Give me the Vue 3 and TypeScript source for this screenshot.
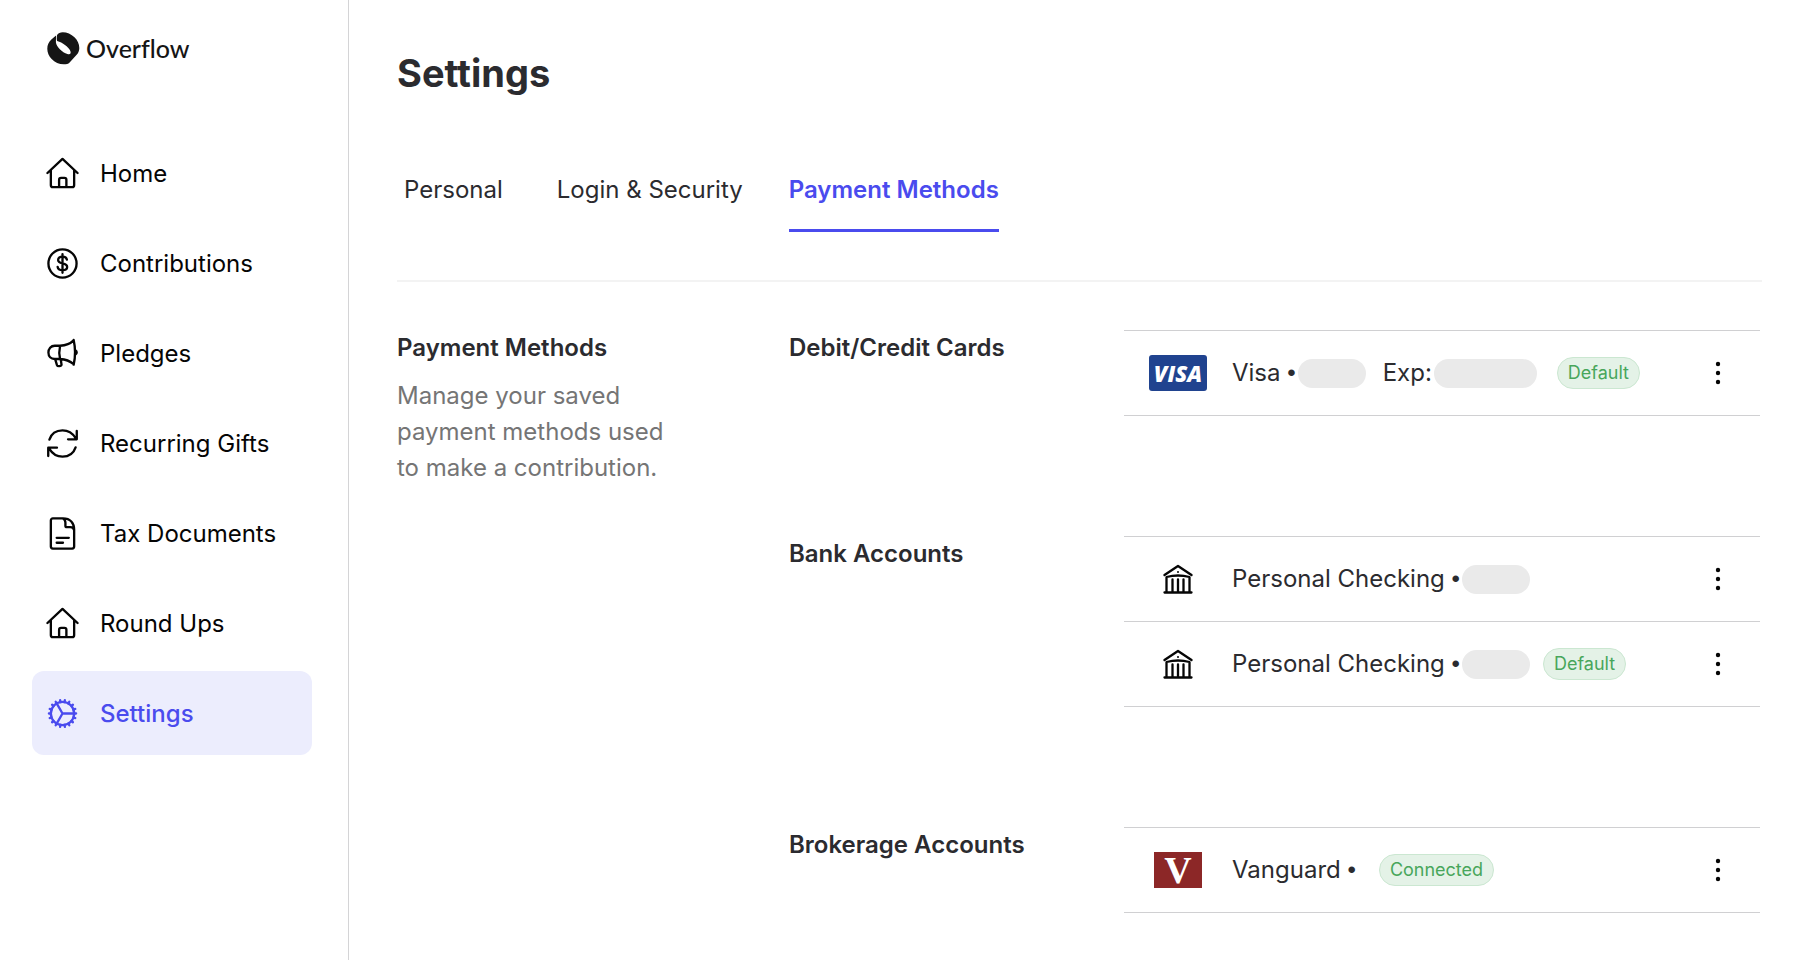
<script setup lang="ts">
import { ref } from 'vue'

type IconName = 'home' | 'coin' | 'megaphone' | 'cycle' | 'document' | 'gear'

interface NavItem {
  label: string
  icon: IconName
}

interface Method {
  name: string
  logo: 'visa' | 'bank' | 'vanguard'
  masked: boolean
  expiry?: boolean
  badge?: string
}

interface Group {
  title: string
  methods: Method[]
}

const navItems: NavItem[] = [
  { label: 'Home', icon: 'home' },
  { label: 'Contributions', icon: 'coin' },
  { label: 'Pledges', icon: 'megaphone' },
  { label: 'Recurring Gifts', icon: 'cycle' },
  { label: 'Tax Documents', icon: 'document' },
  { label: 'Round Ups', icon: 'home' },
  { label: 'Settings', icon: 'gear' },
]
const activeNav = ref('Settings')

const tabs = ['Personal', 'Login & Security', 'Payment Methods']
const activeTab = ref('Payment Methods')

const groups: Group[] = [
  {
    title: 'Debit/Credit Cards',
    methods: [{ name: 'Visa', logo: 'visa', masked: true, expiry: true, badge: 'Default' }],
  },
  {
    title: 'Bank Accounts',
    methods: [
      { name: 'Personal Checking', logo: 'bank', masked: true },
      { name: 'Personal Checking', logo: 'bank', masked: true, badge: 'Default' },
    ],
  },
  {
    title: 'Brokerage Accounts',
    methods: [{ name: 'Vanguard', logo: 'vanguard', masked: false, badge: 'Connected' }],
  },
]

const teeth = Array.from({ length: 18 }, (_, i) => i * 20 + 10)
</script>

<template>
  <div class="app">
    <aside class="sidebar">
      <a class="brand" href="#">
        <svg class="brand-mark" viewBox="0 0 34 34" aria-hidden="true">
          <path
            fill="#151515"
            d="M9.300 3.500 4.500 7.600C1.700 10.200.3 13.200.3 17.200c0 3.800 1.600 7.500 4.500 10.500 3.200 3.400 7.700 5.600 12.500 5.600 2.600 0 4.500-.5 6-2l7.500-8c1.600-1.800 2.500-4.200 2.500-6.800 0-4-1.900-8-5-11C25 2.200 20.500.3 16.200.3c-2.600 0-4.600 1-5.800 2.700C9.900 5 9.900 8.200 10.500 9.300c5.500 1.300 11.500 6.200 13.300 9.700 1.400 2.900.3 4.600-2.800 3.700C15.800 21.200 9.500 15 9.200 10.500z"
          />
        </svg>
        <span class="brand-name">Overflow</span>
      </a>
      <nav class="nav" aria-label="Main">
        <a
          v-for="item in navItems"
          :key="item.label"
          href="#"
          class="nav-item"
          :class="{ active: item.label === activeNav }"
          @click.prevent="activeNav = item.label"
        >
          <svg class="icon" viewBox="0 0 34 34" aria-hidden="true">
            <template v-if="item.icon === 'home'">
              <path d="M1.500 16.500 17 2l15.500 14.500M5 13.500V29a2 2 0 0 0 2 2h20a2 2 0 0 0 2-2V13.500M13.500 31v-7.500a2 2 0 0 1 2-2h3.500a2 2 0 0 1 2 2V31" />
            </template>
            <template v-else-if="item.icon === 'coin'">
              <circle cx="17" cy="17" r="14.500" />
              <path d="M17 7.500v19M21.500 13c-.3-2-2-3-4.500-3-2.700 0-4.500 1.200-4.500 3.300 0 2.400 2 3 4.500 3.600 2.700.6 4.800 1.300 4.800 3.700 0 2.200-2 3.300-4.800 3.300-2.700 0-4.700-1.100-5-3.400" />
            </template>
            <template v-else-if="item.icon === 'megaphone'">
              <path d="M14.500 9H9c-4 0-6.500 3-6.500 7s2.500 6.700 6.500 6.700h5.500C20 23 25 25 28.500 28M14.500 9C20 8.700 25 7 28.500 3.500M14.500 9c-1 4.500-1 9.500 0 13.700M28.500 3c1.800 8 1.800 17.500 0 25.500M30.500 14c1.500 1 1.500 2.800 0 3.800M9.500 23l1.800 6c.5 1.500 4.500 1.500 4.700-.5l-.8-5.300" />
            </template>
            <template v-else-if="item.icon === 'cycle'">
              <path d="M3.500 13C5.500 7 10.500 3.500 17 3.500c5.800 0 10.500 3 13.500 8M31.700 4v8.700h-9M30.500 21c-2 6-7 9.500-13.500 9.500-5.800 0-10.500-3-13.500-8M2.300 30v-8.700h9" />
            </template>
            <template v-else-if="item.icon === 'document'">
              <path d="M17.500 1.500H7a2 2 0 0 0-2 2V30.500a2 2 0 0 0 2 2h20a2 2 0 0 0 2-2V13C29 6 25 1.500 17.500 1.500c1.800 1 2.500 2.500 2.500 4.500v3a1.500 1.500 0 0 0 1.500 1.500H25c2.200 0 3.500 1 4 3M11 21.500h12.500M11 26.500h6.500" />
            </template>
            <template v-else>
              <circle cx="17" cy="17" r="12" />
              <path
                v-for="angle in teeth"
                :key="angle"
                d="M17 5V3"
                :transform="`rotate(${angle} 17 17)`"
              />
              <path d="M29 17H17L11 6.600M17 17l-6 10.400" />
            </template>
          </svg>
          <span class="nav-label">{{ item.label }}</span>
        </a>
      </nav>
    </aside>

    <main class="content">
      <h1>Settings</h1>
      <div class="tabs" role="tablist">
        <button
          v-for="tab in tabs"
          :key="tab"
          type="button"
          role="tab"
          class="tab"
          :class="{ selected: tab === activeTab }"
          :aria-selected="tab === activeTab"
          @click="activeTab = tab"
        >
          {{ tab }}
        </button>
      </div>

      <div class="panel">
        <section class="intro">
          <h2>Payment Methods</h2>
          <p>Manage your saved payment methods used to make a contribution.</p>
        </section>
        <div class="groups">
          <section v-for="group in groups" :key="group.title" class="group">
            <h2>{{ group.title }}</h2>
            <ul class="methods">
              <li v-for="(method, index) in group.methods" :key="index" class="method">
                <span class="logo-cell">
                  <span v-if="method.logo === 'visa'" class="visa">VISA</span>
                  <svg v-else-if="method.logo === 'bank'" class="bank" viewBox="0 0 30 30" aria-hidden="true">
                    <path d="M1.500 11 15 2l13.500 9M3.500 28V13c7-1.800 16-1.800 23 0v15M1.500 28.500h27M9.500 15.500v13M15 15.500v13M20.500 15.500v13" />
                    <circle cx="15" cy="8" r="1" />
                  </svg>
                  <span v-else class="vanguard" aria-hidden="true">V</span>
                </span>
                <span class="method-name">{{ method.name }} <span class="bullet">•</span></span>
                <span v-if="method.masked" class="mask"></span>
                <template v-if="method.expiry">
                  <span class="expiry">Exp:</span>
                  <span class="mask wide"></span>
                </template>
                <span
                  v-if="method.badge"
                  class="badge"
                  :class="{ spaced: method.expiry, far: !method.masked }"
                >{{ method.badge }}</span>
                <button type="button" class="more" :aria-label="`Options for ${method.name}`">
                  <svg viewBox="0 0 8 24" aria-hidden="true">
                    <circle cx="4" cy="3" r="2.200" />
                    <circle cx="4" cy="12" r="2.200" />
                    <circle cx="4" cy="21" r="2.200" />
                  </svg>
                </button>
              </li>
            </ul>
          </section>
        </div>
      </div>
    </main>
  </div>
</template>

<style>
body {
  margin: 0;
  background: #fff;
}
</style>

<style scoped>
.app {
  display: flex;
  min-height: 100vh;
  font-family: Inter, "Liberation Sans", sans-serif;
  font-size: 24px;
  line-height: 36px;
  color: #2b2b2f;
}

.sidebar {
  flex: 0 0 349px;
  box-sizing: border-box;
  padding: 32px 36px 0 32px;
  border-right: 1px solid #d4d4d6;
}

.brand {
  display: flex;
  align-items: center;
  gap: 6px;
  height: 32px;
  padding-left: 15px;
  margin-bottom: 67px;
  color: #151515;
  text-decoration: none;
}

.brand-mark {
  width: 33px;
  height: 33px;
}

.brand-name {
  font-family: Lato, sans-serif;
  font-size: 25px;
  line-height: 32px;
  font-weight: 500;
  font-variant-ligatures: none;
}

.nav {
  display: flex;
  flex-direction: column;
  gap: 6px;
}

.nav-item {
  display: flex;
  align-items: center;
  gap: 21px;
  height: 84px;
  padding-left: 14px;
  border-radius: 12px;
  color: #050505;
  text-decoration: none;
}

.nav-item.active {
  background: #ecedfd;
  color: #4a4bee;
  font-weight: 500;
}

.nav-label {
  padding-top: 2px;
}

.icon {
  width: 33px;
  height: 33px;
  fill: none;
  stroke: currentColor;
  stroke-width: 2.4;
  stroke-linecap: round;
  stroke-linejoin: round;
}

.content {
  flex: 1;
  min-width: 0;
  padding: 47px 40px 0 48px;
}

h1 {
  margin: 0 0 67px;
  font-size: 38px;
  line-height: 52px;
  font-weight: 700;
}

.tabs {
  display: flex;
  gap: 46px;
  padding-bottom: 48px;
  border-bottom: 2px solid #f3f3f3;
}

.tab {
  padding: 6px 0 21px;
  border: 0;
  border-bottom: 3px solid transparent;
  background: none;
  font: inherit;
  color: inherit;
  cursor: pointer;
}

.tab:first-child {
  padding-right: 8px;
  padding-left: 7px;
}

.tab.selected {
  border-bottom-color: #4a4bee;
  color: #4a4bee;
  font-weight: 600;
}

.panel {
  display: grid;
  grid-template-columns: 392fr 971fr;
  padding: 48px 2px 0 0;
}

h2 {
  margin: 0;
  font-size: 24px;
  line-height: 36px;
  font-weight: 600;
}

.intro p {
  max-width: 280px;
  margin: 12px 0 0;
  color: #757575;
}

.groups {
  display: flex;
  flex-direction: column;
  gap: 120px;
}

.group {
  display: grid;
  grid-template-columns: 335fr 636fr;
}

.methods {
  margin: 0;
  padding: 0;
  list-style: none;
  border-top: 1px solid #d0d0d2;
}

.method {
  display: flex;
  align-items: center;
  height: 84px;
  border-bottom: 1px solid #d0d0d2;
}

.logo-cell {
  display: flex;
  justify-content: center;
  flex: 0 0 108px;
}

.visa {
  width: 58px;
  height: 36px;
  border-radius: 3px;
  background: #20438f;
  color: #fff;
  font: italic 800 22px/36px "Open Sans", sans-serif;
  text-align: center;
}

.bank {
  width: 30px;
  height: 30px;
  fill: none;
  stroke: #050505;
  stroke-width: 2.3;
  stroke-linecap: round;
  stroke-linejoin: round;
}

.bank circle {
  fill: #050505;
  stroke: none;
}

.vanguard {
  width: 48px;
  height: 36px;
  background: #8c2727;
  color: #fff;
  font: 700 38px/36px "Liberation Serif", serif;
  text-align: center;
}

.bullet {
  font-family: "Liberation Sans", sans-serif;
}

.mask {
  width: 68px;
  height: 29px;
  margin-left: 2px;
  border-radius: 15px;
  background: #eaeaea;
}

.mask.wide {
  width: 103px;
}

.expiry {
  margin-left: 17px;
}

.badge {
  padding: 0 10px;
  margin-left: 13px;
  border: 1px solid #cbe7d1;
  border-radius: 16px;
  background: #e4f2e7;
  color: #48a65b;
  font-size: 18px;
  line-height: 30px;
}

.badge.spaced {
  margin-left: 20px;
}

.badge.far {
  margin-left: 23px;
}

.more {
  display: flex;
  justify-content: center;
  width: 32px;
  padding: 4px 0;
  margin: 0 26px 0 auto;
  border: 0;
  background: none;
  cursor: pointer;
}

.more svg {
  width: 8px;
  height: 24px;
  fill: #050505;
}
</style>
